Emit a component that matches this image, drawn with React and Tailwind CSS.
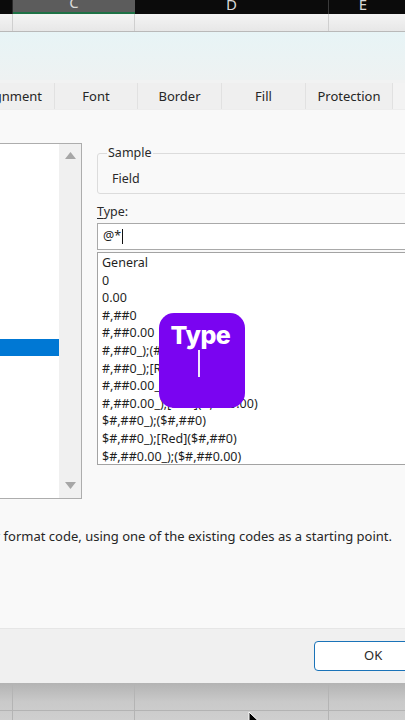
// App.jsx — Format Cells dialog (Number tab, Custom) cropped to a phone frame
const UI_FONT = { fontFamily: '"Noto Sans", "Open Sans", sans-serif' };

const FORMAT_CODES = [
  'General',
  '0',
  '0.00',
  '#,##0',
  '#,##0.00',
  '#,##0_);(#,##0)',
  '#,##0_);[Red](#,##0)',
  '#,##0.00_);(#,##0.00)',
  '#,##0.00_);[Red](#,##0.00)',
  '$#,##0_);($#,##0)',
  '$#,##0_);[Red]($#,##0)',
  '$#,##0.00_);($#,##0.00)',
];

const TABS = [
  { label: 'Alignment', w: 'w-[55px]', cut: true },
  { label: 'Font', w: 'w-[83px]' },
  { label: 'Border', w: 'w-[84px]' },
  { label: 'Fill', w: 'w-[84px]' },
  { label: 'Protection', w: 'w-[87px]' },
];

const ColumnHeader = () => (
  <div className="flex h-[14px] bg-[#0b0b0b] text-[15px] leading-none text-[#d9d9d9]">
    <div className="w-[13px] shrink-0 border-r border-[#2a2a2a]" />
    <div className="w-[122px] shrink-0 flex items-end justify-center overflow-hidden pb-[2px] bg-[#5c5c5c] border-b-2 border-[#1e7145]">C</div>
    <div className="w-[194px] shrink-0 flex items-end justify-center overflow-hidden pb-[2px] border-r border-[#3a3a3a]">D</div>
    <div className="flex-1 flex items-end justify-center overflow-hidden pb-[2px] pr-[8px]">E</div>
  </div>
);

const CellRow = () => (
  <div className="flex h-[18px] bg-gradient-to-b from-[#f4f4f4] to-[#e7e7e7] border-b border-[#b9b9b9]">
    <div className="w-[13px] shrink-0 border-r border-[#cfcfcf]" />
    <div className="w-[122px] shrink-0 border-r border-[#cfcfcf]" />
    <div className="w-[194px] shrink-0 border-r border-[#cfcfcf]" />
    <div className="flex-1" />
  </div>
);

const Triangle = ({ down }) => (
  <svg width="11" height="7" viewBox="0 0 11 7">
    <path d={down ? 'M0 0H11L5.5 7Z' : 'M0 7H11L5.5 0Z'} fill="#a6a6a6" />
  </svg>
);

const CategoryList = () => (
  <div className="w-[82px] shrink-0 h-[356px] flex bg-white border border-l-0 border-[#adadad]">
    <div className="w-[59px] shrink-0 flex flex-col">
      <div className="h-[195px]" />
      <div className="h-[17px] bg-[#0078d4]" />
    </div>
    <div className="flex-1 bg-[#f0f0f0] flex flex-col items-center justify-between pt-[8px] pb-[9px]">
      <Triangle />
      <Triangle down />
    </div>
  </div>
);

const TypeOverlay = () => (
  <div className="absolute left-[61px] top-[60px] w-[86px] h-[95px] rounded-[15px] bg-[#7a04f1] flex flex-col items-center pt-[6px]">
    <span className="text-white text-[25px] font-extrabold leading-[32px] tracking-[-0.5px] mr-[3px]" style={{ fontFamily: 'Inter, Roboto, sans-serif' }}>
      Type
    </span>
    <div className="w-[1.5px] h-[27px] bg-white/90 mt-[-1px] mr-[6px]" />
  </div>
);

export default function App() {
  return (
    <div className="relative w-[405px] h-[720px] overflow-hidden flex flex-col bg-[#f9f9f9] text-[#1f1f1f]" style={UI_FONT}>
      <ColumnHeader />
      <CellRow />

      {/* dialog title strip */}
      <div className="h-[48px] bg-gradient-to-b from-[#e7f4f6] to-[#eef2f2]" />
      <div className="h-[3px] bg-[#f1f2f2]" />

      {/* tabs */}
      <div className="flex h-[27px] bg-[#f1f1f1] border-b border-[#ededed] text-[13px]">
        {TABS.map((t) => (
          <div
            key={t.label}
            className={`${t.w} shrink-0 flex items-center pt-[2px] ${t.cut ? 'justify-end pr-[12px]' : 'justify-center'} overflow-hidden whitespace-nowrap border-r border-[#e1e1e1] bg-[#efefef] text-[#262626]`}
          >
            {t.label}
          </div>
        ))}
        <div className="flex-1 bg-[#f3f3f3]" />
      </div>

      {/* main content */}
      <div className="h-[518px] flex flex-col bg-[#f9f9f9]">
        <div className="flex pt-[33px]">
          <CategoryList />

          <div className="ml-[15px] w-[330px] shrink-0 flex flex-col text-[12.5px]">
            <fieldset className="h-[49px] border border-[#dcdcdc] rounded-[3px] pl-[9px] mt-[2px]">
              <legend className="px-[1px] leading-[16px] text-[#2a2a2a]">Sample</legend>
              <div className="pl-[5px] pt-[10px] leading-[16px] text-[#2a2a2a]">Field</div>
            </fieldset>

            <div className="mt-[10px] leading-[16px] text-[#2a2a2a]">
              <span className="underline underline-offset-2">T</span>ype:
            </div>

            <div className="mt-[3px] h-[27px] bg-white border border-[#a9a9a9] flex items-center pl-[5px] text-[12.5px]">
              @*<span className="inline-block w-px h-[15px] bg-[#111] ml-[1px]" />
            </div>

            <div className="relative mt-[2px] h-[213px] bg-white border border-[#a3a3a3] pl-[4px] pt-[1px] leading-[17.6px] text-[#1f1f1f] overflow-hidden">
              {FORMAT_CODES.map((c) => (
                <div key={c} className="whitespace-nowrap">{c}</div>
              ))}
              <TypeOverlay />
            </div>
          </div>
        </div>

        <div className="mt-[28px] flex justify-end pr-[13px] whitespace-nowrap text-[13px] text-[#262626]">
          Type the number format code, using one of the existing codes as a starting point.
        </div>
      </div>

      {/* footer */}
      <div className="h-[55px] bg-[#f0f0f0] border-t border-[#e6e6e6] flex items-start pt-[12px]">
        <div className="ml-[314px] w-[116px] h-[30px] shrink-0 bg-white border border-[#1a73b8] rounded-[4px] flex items-center pl-[49px] text-[13px] text-[#2a2a2a]">
          OK
        </div>
      </div>

      {/* sheet grid below the dialog */}
      <div className="flex-1 flex flex-col bg-gradient-to-b from-[#b3b3b3] via-[#c9c9c9] to-[#cfcfcf]">
        <div className="h-[28px] flex border-b border-[#b3b3b3]">
          <div className="w-[13px] shrink-0 border-r border-[#b4b4b4]" />
          <div className="w-[122px] shrink-0 border-r border-[#b4b4b4]" />
          <div className="w-[194px] shrink-0 border-r border-[#b4b4b4]" />
        </div>
        <div className="flex-1 flex">
          <div className="w-[13px] shrink-0 border-r border-[#b4b4b4]" />
          <div className="w-[122px] shrink-0 border-r border-[#b4b4b4]" />
          <div className="w-[194px] shrink-0 border-r border-[#b4b4b4]" />
        </div>
      </div>

      {/* mouse pointer */}
      <svg className="absolute left-[248px] top-[711px]" width="12" height="18" viewBox="0 0 12 18">
        <path d="M1 1V15L4.5 11.5L7 17L9 16L6.5 10.5H11Z" fill="#000" stroke="#fff" strokeWidth="1" />
      </svg>
    </div>
  );
}
